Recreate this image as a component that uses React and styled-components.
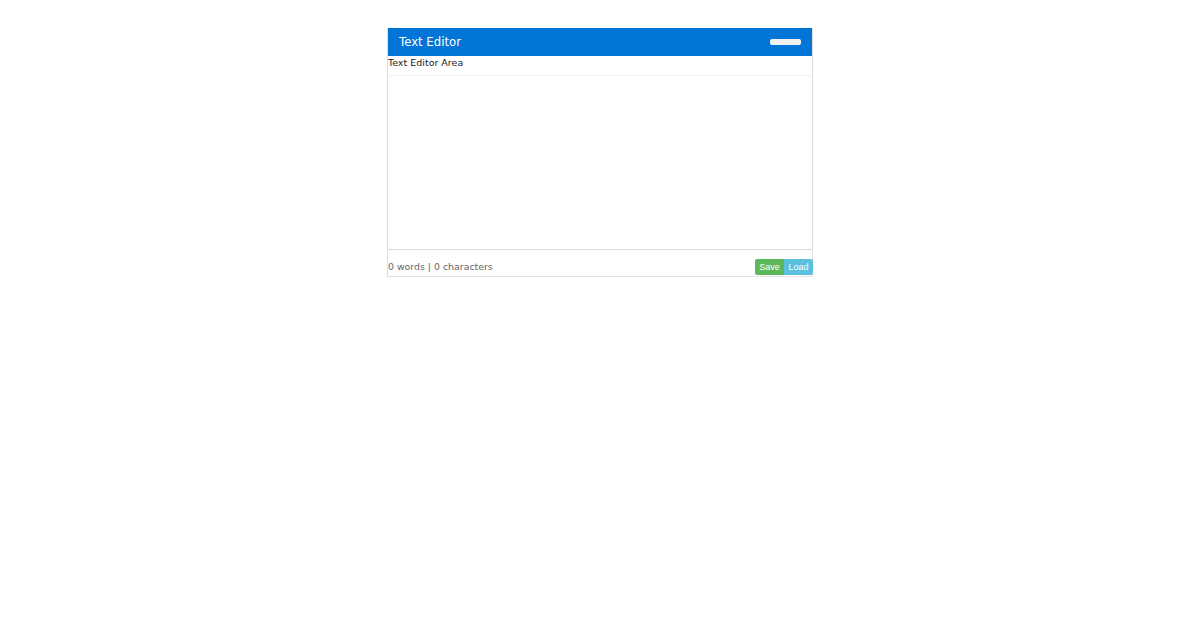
import styled, { createGlobalStyle } from 'styled-components';

const GlobalStyle = createGlobalStyle`
    body {
        margin: 0;
        background: #fff;
        font-family: "DejaVu Sans", sans-serif;
    }
`;

const App = () => {
    return (
        <Page>
            <GlobalStyle />
            <Editor>
                <Header>
                    <Title>Text Editor</Title>
                    <Handle />
                </Header>
                <AreaLabel>Text Editor Area</AreaLabel>
                <TextArea />
                <Footer>
                    <Counter>0 words | 0 characters</Counter>
                    <ButtonGroup>
                        <Button $bg="#5cb85c" $side="left">Save</Button>
                        <Button $bg="#5bc0de" $side="right">Load</Button>
                    </ButtonGroup>
                </Footer>
            </Editor>
        </Page>
    );
};

export default App;

const Page = styled.div`
    display: flex;
    justify-content: center;
    padding-top: 28px;
`;

const Editor = styled.div`
    width: 424px;
    display: flex;
    flex-direction: column;
    border-left: 1px solid #ddd;
    border-right: 1px solid #ddd;
    border-bottom: 1px solid #e4e4e4;
`;

const Header = styled.div`
    height: 28px;
    background: #0275d8;
    display: flex;
    align-items: center;
    justify-content: space-between;
    padding: 0 11px 0 11px;
`;

const Title = styled.span`
    color: #fff;
    font-size: 11.7px;
`;

const Handle = styled.div`
    width: 31px;
    height: 6px;
    border-radius: 2px;
    background: #f2f2f2;
`;

const AreaLabel = styled.div`
    height: 19px;
    line-height: 13px;
    font-size: 9.5px;
    color: #222;
    border-bottom: 1px solid #f0f0f0;
`;

const TextArea = styled.div`
    height: 173px;
    border-bottom: 1px solid #ddd;
`;

const Footer = styled.div`
    height: 26px;
    display: flex;
    align-items: flex-end;
    justify-content: space-between;
`;

const Counter = styled.span`
    font-size: 9.4px;
    color: #666;
    line-height: 14px;
    padding-bottom: 2px;
`;

const ButtonGroup = styled.div`
    display: flex;
    margin: 0 -1px 1px 0;
`;

const Button = styled.div`
    width: 29px;
    height: 16px;
    display: flex;
    align-items: center;
    justify-content: center;
    background: ${(p) => p.$bg};
    color: #fff;
    font-family: "Liberation Sans", Arial, sans-serif;
    font-size: 9px;
    border-radius: ${(p) => (p.$side === 'left' ? '2px 0 0 2px' : '0 2px 2px 0')};
`;
